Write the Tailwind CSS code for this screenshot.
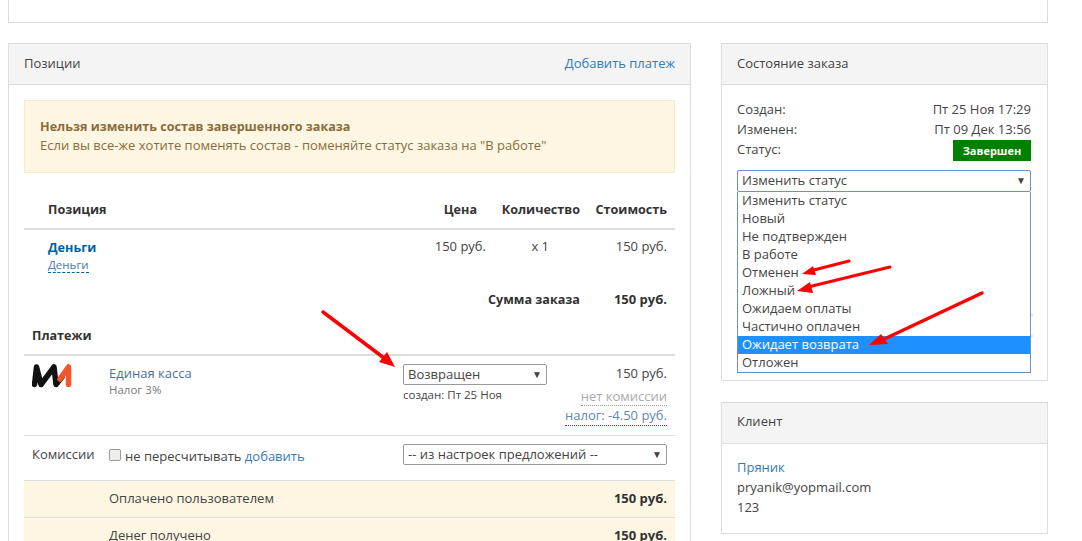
<!DOCTYPE html>
<html lang="en">
<head>
    <meta charset="UTF-8">
    <title>Заказ</title>
    <script src="https://cdn.jsdelivr.net/npm/@tailwindcss/browser@4"></script>
</head>
<body class="bg-white h-[541px] overflow-hidden relative font-['Open_Sans',sans-serif] text-[13px] text-[#444]">
    <div class="h-[23px] ml-2 w-[1040px] border border-t-0 border-[#ddd]"></div>

    <div class="flex items-start gap-[30px] pl-2 pt-5">
        <!-- left column -->
        <div class="w-[683px] shrink-0 border border-b-0 border-[#ddd]">
            <div class="h-[41px] pb-px bg-[#f4f4f4] border-b border-[#ddd] flex items-center justify-between px-[15px]">
                <span>Позиции</span>
                <a class="text-[#337ab7]">Добавить платеж</a>
            </div>
            <div class="px-[15px] pt-[15px]">
                <div class="h-[73px] pb-[2px] bg-[#fdf6e3] border border-[#faebcc] text-[#8a6d3b] px-[15px] flex flex-col justify-center leading-[19px]">
                    <b class="text-[12.6px]">Нельзя изменить состав завершенного заказа</b>
                    <span>Если вы все-же хотите поменять состав - поменяйте статус заказа на "В работе"</span>
                </div>

                <div class="flex items-end h-[57px] pb-2 border-b-2 border-[#ddd] font-bold text-[12.6px] text-[#333]">
                    <span class="pl-6 flex-1">Позиция</span>
                    <span class="w-[50px] text-right">Цена</span>
                    <span class="w-[103px] text-right">Количество</span>
                    <span class="w-[95px] text-right pr-2">Стоимость</span>
                </div>
                <div class="flex h-[51px] pt-[7px]">
                    <div class="pl-6 flex-1 pt-1">
                        <a class="block font-bold text-[12.6px] text-[#00639e] leading-[14px]">Деньги</a>
                        <a class="text-[11.5px] text-[#4a78a8] border-b border-dashed border-[#00639e]">Деньги</a>
                    </div>
                    <span class="w-[60px] text-right">150 руб.</span>
                    <span class="w-[63px] text-right">x 1</span>
                    <span class="w-[126px] text-right pr-2">150 руб.</span>
                </div>
                <div class="flex justify-end h-[36px] items-center font-bold text-[#333] pr-2 gap-[34px] mt-[1px]">
                    <span class="text-[12.6px]">Сумма заказа</span>
                    <span>150 руб.</span>
                </div>

                <div class="h-[38px] border-b-2 border-[#ddd] font-bold text-[12.6px] text-[#333] pl-2 pt-[9px]">Платежи</div>
                <div class="flex h-[80px] pt-2 border-b border-[#ddd]">
                    <div class="w-[85px] pl-2">
                        <svg width="40" height="24" viewBox="32 364 40 24" class="block" fill="none" stroke-width="5.500" stroke-linejoin="round" stroke-linecap="round">
                            <path d="M34.500 384.500L36.500 367L41 384.500L54 367L56 384.500L62 377" stroke="#111"/>
                            <path d="M60 379L68.500 367V384.500" stroke="#f4562a"/>
                        </svg>
                    </div>
                    <div class="w-[294px]">
                        <a class="block text-[#4a6fa5] leading-[18px]">Единая касса</a>
                        <span class="block text-[11.5px] text-[#777] leading-4">Налог 3%</span>
                    </div>
                    <div class="w-[144px]">
                        <div class="h-[21px] border border-[#999] rounded-[2px] flex items-center justify-between px-1">
                            <span>Возвращен</span><span class="text-[10px]">▼</span>
                        </div>
                        <div class="text-[11.5px] leading-4 mt-[2px] whitespace-nowrap">создан: Пт 25 Ноя</div>
                    </div>
                    <div class="flex-1 flex flex-col items-end pr-2 whitespace-nowrap">
                        <span class="leading-[18px]">150 руб.</span>
                        <span class="text-[#aaa] border-b border-dotted border-[#999] leading-[17px] mt-[6px]">нет комиссии</span>
                        <span class="text-[#5f87b3] border-b border-dotted border-[#00639e] leading-[19px]">налог: -4.50 руб.</span>
                    </div>
                </div>
                <div class="flex h-[45px] pt-2 items-start border-b border-[#ddd]">
                    <span class="w-[85px] pl-2 leading-[21px]">Комиссии</span>
                    <div class="w-[294px] h-[21px] flex items-center gap-1">
                        <span class="w-3 h-3 bg-[#eee] border border-[#999] rounded-[2px]"></span>
                        <span class="pt-1">не пересчитывать <a class="text-[#337ab7]">добавить</a></span>
                    </div>
                    <div class="w-[264px] h-[21px] border border-[#999] rounded-[2px] flex items-center justify-between px-1">
                        <span>-- из настроек предложений --</span><span class="text-[10px]">▼</span>
                    </div>
                </div>
                <div class="flex h-[37px] items-center bg-[#fdf6e3] border-b border-[#ddd] pl-[85px] pr-2 justify-between">
                    <span>Оплачено пользователем</span><b class="text-[#333]">150 руб.</b>
                </div>
                <div class="flex h-[37px] pb-[2px] items-center bg-[#fdf6e3] pl-[85px] pr-2 justify-between">
                    <span>Денег получено</span><b class="text-[#333]">150 руб.</b>
                </div>
            </div>
        </div>

        <!-- right column -->
        <div class="w-[327px] shrink-0 flex flex-col gap-[21px]">
            <div class="h-[338px] border border-[#ddd]">
                <div class="h-[41px] pb-px bg-[#f4f4f4] border-b border-[#ddd] flex items-center px-[15px]">Состояние заказа</div>
                <div class="pl-[15px] pr-4 pt-[14px] leading-5">
                    <div class="flex justify-between"><span>Создан:</span><span>Пт 25 Ноя 17:29</span></div>
                    <div class="flex justify-between"><span>Изменен:</span><span>Пт 09 Дек 13:56</span></div>
                    <div class="flex justify-between items-start"><span>Статус:</span><span class="w-[78px] h-[21px] mt-[1px] bg-[#008000] text-white font-bold text-[11px] flex items-center justify-center">Завершен</span></div>
                    <div class="mt-[9px] h-[22px] pb-[2px] border border-[#6c8fd0] rounded-[2px] flex items-center justify-between px-1">
                        <span>Изменить статус</span><span class="text-[10px]">▼</span>
                    </div>
                    <ul class="border border-t-0 border-[#6c8fd0] leading-[16px]">
                        <li class="px-1 pb-[2px]">Изменить статус</li>
                        <li class="px-1 pb-[2px]">Новый</li>
                        <li class="px-1 pb-[2px]">Не подтвержден</li>
                        <li class="px-1 pb-[2px]">В работе</li>
                        <li class="px-1 pb-[2px]">Отменен</li>
                        <li class="px-1 pb-[2px]">Ложный</li>
                        <li class="px-1 pb-[2px]">Ожидаем оплаты</li>
                        <li class="px-1 pb-[2px]">Частично оплачен</li>
                        <li class="px-1 pb-[2px] bg-[#1e90ff] text-white">Ожидает возврата</li>
                        <li class="px-1 pb-[2px]">Отложен</li>
                    </ul>
                </div>
            </div>
            <div class="h-[132px] border border-[#ddd]">
                <div class="h-[41px] pb-[2px] bg-[#f4f4f4] border-b border-[#ddd] flex items-center px-[15px]">Клиент</div>
                <div class="px-[15px] pt-[13px] leading-5">
                    <a class="block text-[#337ab7]">Пряник</a>
                    <div>pryanik@yopmail.com</div>
                    <div>123</div>
                </div>
            </div>
        </div>
    </div>

    <!-- red annotation arrows -->
    <svg class="absolute left-0 top-0 pointer-events-none" width="1082" height="541" viewBox="0 0 1082 541">
        <g stroke="#f00" stroke-linecap="round" fill="none">
            <path d="M323 312L384 358" stroke-width="3.500"/>
            <path d="M849 261L812 270.500" stroke-width="3"/>
            <path d="M890 267L808 287" stroke-width="3"/>
            <path d="M982 293L880 341" stroke-width="3.500"/>
        </g>
        <g fill="#f00">
            <path d="M395 367L379 362L387 352Z"/>
            <path d="M802 274L813 266L816 275Z"/>
            <path d="M797 291L810 282L813 293Z"/>
            <path d="M869 345L881 334L888 344Z"/>
        </g>
        <path d="M1031 315h2M1031 336h2" stroke="#b8c8e4" stroke-width="1"/>
    </svg>
</body>
</html>
